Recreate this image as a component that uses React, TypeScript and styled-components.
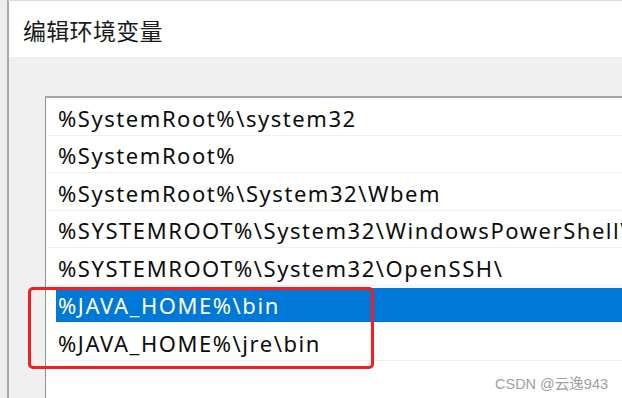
import React from 'react';
import styled, { createGlobalStyle } from 'styled-components';

const GlobalStyle = createGlobalStyle`
  html, body {
    margin: 0;
    padding: 0;
    background: #ededed;
    overflow: hidden;
  }
  body {
    font-family: "Noto Sans", "Noto Sans CJK SC", sans-serif;
  }
`;

const Page = styled.div`
  position: relative;
  width: 622px;
  height: 398px;
  overflow: hidden;
`;

const Dialog = styled.div`
  display: flex;
  flex-direction: column;
  margin-left: 7px;
  height: 397px;
  border-top: 1px solid #dcdcdc;
  border-left: 2px solid #a8a8a8;
`;

const Header = styled.div`
  height: 56px;
  background: #ffffff;
  display: flex;
  align-items: center;
  padding-left: 14px;
`;

const Title = styled.h1`
  margin: 0;
  font-family: "Noto Sans CJK SC", sans-serif;
  font-weight: 400;
  font-size: 23px;
  color: #1a1a1a;
  letter-spacing: 0.3px;
  padding-top: 2px;
`;

const Body = styled.div`
  flex: 1;
  background: #f0f0f0;
  padding: 39px 0 0 36px;
  display: flex;
`;

const ListBox = styled.ul`
  flex: 1;
  margin: 0;
  padding: 0 0 0 2px;
  list-style: none;
  background: #ffffff;
  border-top: 2px solid #a3a7ad;
  border-left: 1px solid #8d9199;
  overflow: hidden;
`;

const Row = styled.li<{ $selected?: boolean }>`
  height: 37.5px;
  box-sizing: border-box;
  display: flex;
  align-items: center;
  padding-top: 3px;
  border-bottom: 1px solid #f0f0f0;
  white-space: nowrap;
  font-family: "Noto Sans", sans-serif;
  font-size: 22px;
  letter-spacing: 1.55px;
  color: ${(p) => (p.$selected ? '#ffffff' : '#0d0d0d')};
  background: ${(p) =>
    p.$selected ? 'linear-gradient(#ffffff 0 2px, #0078d7 2px)' : '#ffffff'};
  margin-left: ${(p) => (p.$selected ? '8px' : '0')};
  padding-left: ${(p) => (p.$selected ? '2px' : '10px')};
`;

const Highlight = styled.div`
  position: absolute;
  left: 28px;
  top: 287px;
  width: 346px;
  height: 82px;
  box-sizing: border-box;
  border: 3px solid #f41e1e;
  border-radius: 5px;
  pointer-events: none;
`;

const Watermark = styled.span`
  position: absolute;
  left: 495px;
  top: 372px;
  font-family: "Liberation Sans", "Noto Sans CJK SC", sans-serif;
  font-size: 14.5px;
  color: #a0a0a0;
`;

const paths = [
  '%SystemRoot%\\system32',
  '%SystemRoot%',
  '%SystemRoot%\\System32\\Wbem',
  '%SYSTEMROOT%\\System32\\WindowsPowerShell\\v1.0\\',
  '%SYSTEMROOT%\\System32\\OpenSSH\\',
  '%JAVA_HOME%\\bin',
  '%JAVA_HOME%\\jre\\bin',
];

export default function App() {
  const selected = 5;
  return (
    <Page>
      <GlobalStyle />
      <Dialog>
        <Header>
          <Title>编辑环境变量</Title>
        </Header>
        <Body>
          <ListBox>
            {paths.map((p, i) => (
              <Row key={p} $selected={i === selected}>
                {p}
              </Row>
            ))}
          </ListBox>
        </Body>
      </Dialog>
      <Highlight />
      <Watermark>CSDN @云逸943</Watermark>
    </Page>
  );
}
